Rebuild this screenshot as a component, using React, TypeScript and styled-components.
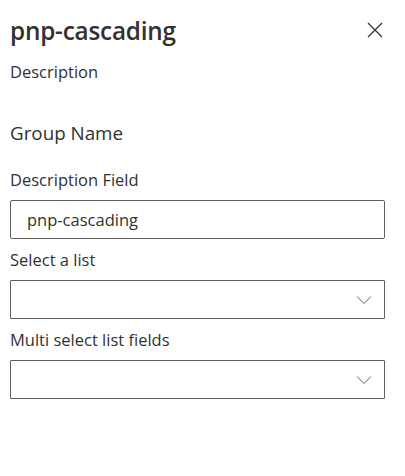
import React from "react";
import styled, { createGlobalStyle } from "styled-components";

const Global = createGlobalStyle`
  html, body { margin: 0; padding: 0; background: #fff; }
  body { font-family: "Open Sans", "Noto Sans", "Liberation Sans", sans-serif; color: #323130; }
`;

const Pane = styled.div`
  width: 405px;
  height: 476px;
  box-sizing: border-box;
  padding: 0 20px 0 10px;
  display: flex;
  flex-direction: column;
`;

const Header = styled.div`
  display: flex;
  align-items: center;
  justify-content: space-between;
  height: 60px;
`;

const Title = styled.h1`
  margin: 0;
  font-size: 24.3px;
  font-weight: 600;
  color: #323130;
  letter-spacing: -0.2px;
`;

const CloseButton = styled.button`
  border: 0;
  background: transparent;
  padding: 0;
  width: 20px;
  height: 20px;
  display: flex;
  align-items: center;
  justify-content: center;
  cursor: pointer;
`;

const Description = styled.div`
  font-size: 16.5px;
  color: #323130;
  line-height: 20px;
  margin-top: 2px;
`;

const GroupName = styled.div`
  font-size: 18.8px;
  color: #323130;
  line-height: 24px;
  margin-top: 39px;
  margin-bottom: 20px;
`;

const Field = styled.div`
  display: flex;
  flex-direction: column;
  margin-bottom: 6px;
`;

const Label = styled.label`
  font-size: 16.5px;
  line-height: 20px;
  color: #323130;
  padding: 5px 0 10px;
`;

const TextBox = styled.div`
  height: 39px;
  box-sizing: border-box;
  border: 1px solid #605e5c;
  border-radius: 2px;
  display: flex;
  align-items: center;
  padding: 0 16px;
  font-size: 16.5px;
  color: #323130;
`;

const Dropdown = styled.div`
  height: 39px;
  box-sizing: border-box;
  border: 1px solid #605e5c;
  border-radius: 1px;
  display: flex;
  align-items: center;
  justify-content: flex-end;
  padding: 0 12px;
`;

const Chevron = () => (
  <svg width="16" height="10" viewBox="0 0 16 10">
    <path d="M1 1.5 L8 8.5 L15 1.5" fill="none" stroke="#605e5c" strokeWidth="1" />
  </svg>
);

export default function App() {
  return (
    <>
      <Global />
      <Pane>
        <Header>
          <Title>pnp-cascading</Title>
          <CloseButton aria-label="Close">
            <svg width="16" height="16" viewBox="0 0 16 16">
              <path d="M1 1 L15 15 M15 1 L1 15" stroke="#323130" strokeWidth="1.2" />
            </svg>
          </CloseButton>
        </Header>
        <Description>Description</Description>
        <GroupName>Group Name</GroupName>
        <Field>
          <Label>Description Field</Label>
          <TextBox>pnp-cascading</TextBox>
        </Field>
        <Field>
          <Label>Select a list</Label>
          <Dropdown>
            <Chevron />
          </Dropdown>
        </Field>
        <Field>
          <Label>Multi select list fields</Label>
          <Dropdown>
            <Chevron />
          </Dropdown>
        </Field>
      </Pane>
    </>
  );
}
